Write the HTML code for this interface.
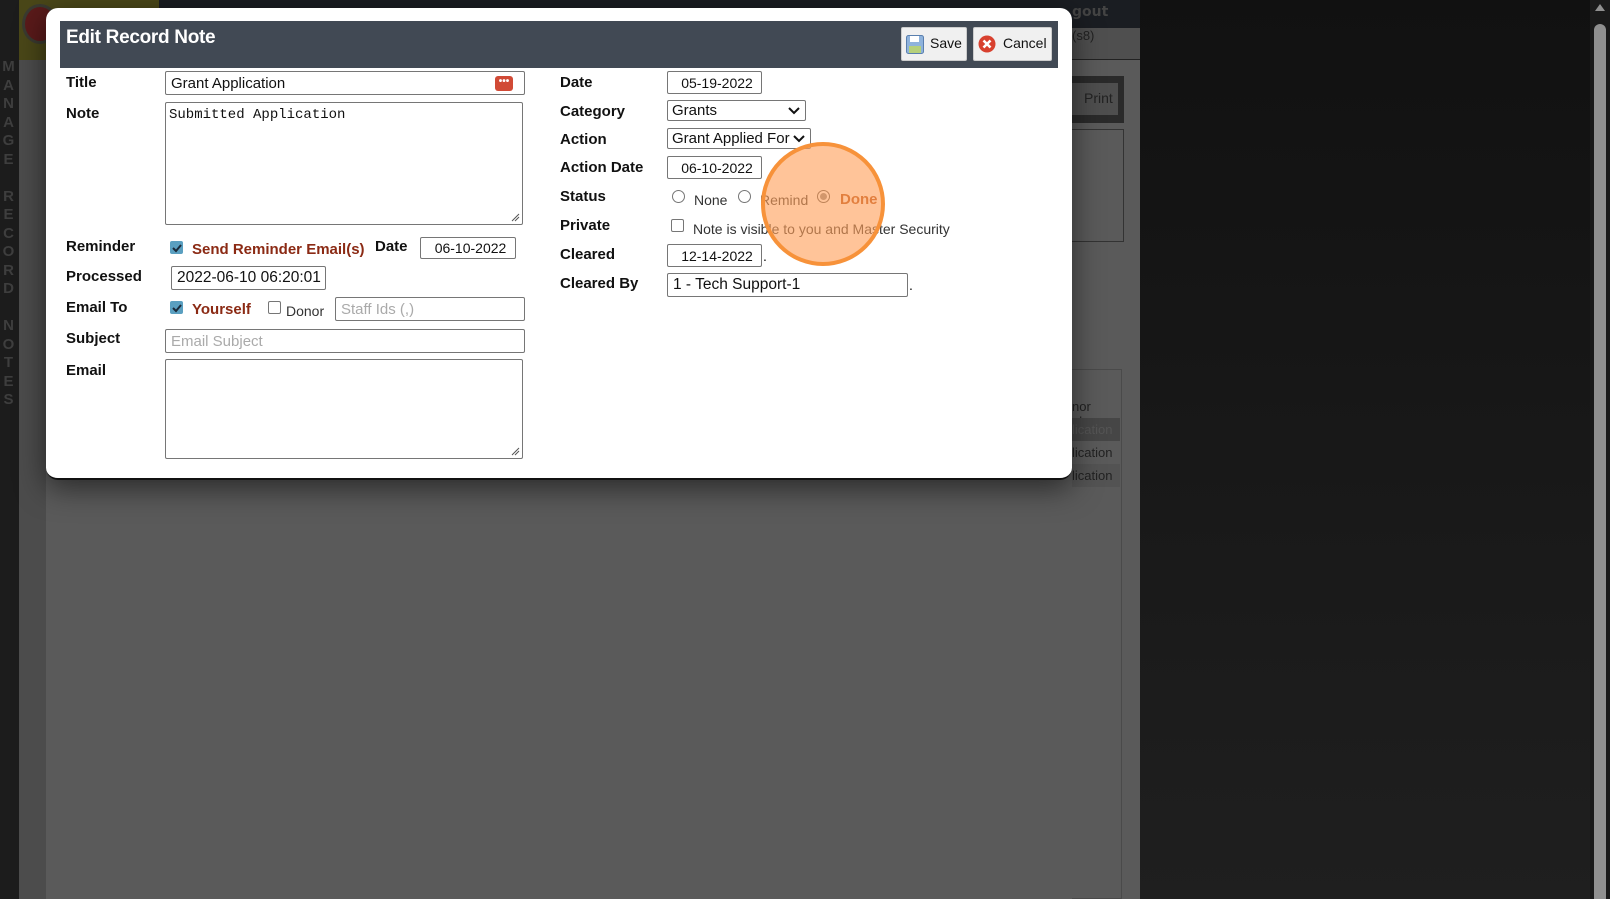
<!DOCTYPE html>
<html><head><meta charset="utf-8"><style>
*{box-sizing:border-box;margin:0;padding:0}
body{width:1610px;height:899px;overflow:hidden;background:#1a1a1a;font-family:"Liberation Sans",Arial,sans-serif;position:relative}
.a{position:absolute}
.lbl{position:absolute;font-weight:bold;color:#111;font-family:"Liberation Sans",sans-serif;font-size:15px}
.inp{position:absolute;border:1px solid #767676;background:#fff;font-size:15px;color:#111;padding-left:5px;display:flex;align-items:center;border-radius:2px}
.ta{position:absolute;border:1px solid #767676;background:#fff;border-radius:2px}
.ph{color:#aaa}
.cb{position:absolute;width:13px;height:13px;border:1px solid #767676;border-radius:2px;background:#fff}
.cbc{position:absolute;width:13px;height:13px;border-radius:2px;background:#5a9fc0}
.rd{position:absolute;width:13px;height:13px;border:1px solid #767676;border-radius:50%;background:#fff}
.txt{position:absolute;font-size:14px;color:#333}
.red{position:absolute;font-weight:bold;color:#8b2a14;font-size:15px;font-family:"Liberation Sans",sans-serif}
.sel{position:absolute;border:1px solid #767676;background:#fff;font-size:15px;color:#111;padding-left:4px;border-radius:2px;line-height:19px}
.sel svg{position:absolute;right:5px;top:6px}
.grip{position:absolute;right:2px;bottom:2px}
</style></head><body>
<div class="a" style="left:0;top:0;width:19px;height:899px;background:#1c1c1c"></div>
<div class="a" style="left:19px;top:0;width:1121px;height:899px;background:#5a5a5a"></div>
<div class="a" style="left:19px;top:0;width:1121px;height:28px;background:#1a1d22"></div>
<div class="a" style="left:19px;top:28px;width:1121px;height:32px;background:#4f4f4f;border-bottom:1px solid #222"></div>
<div class="a" style="left:19px;top:0;width:140px;height:60px;background:#4a4718"></div>
<div class="a" style="left:22px;top:4px;width:36px;height:40px;border-radius:50%;background:#5a1a1a;border:3px solid #3a3a30"></div>
<div class="a" style="left:19px;top:60px;width:27px;height:839px;background:#4c4c4c"></div>
<div class="a" style="left:0;top:58px;width:17px;font:bold 15px 'Liberation Sans',sans-serif;color:#3e3e3e;line-height:18.5px;text-align:center">M<br>A<br>N<br>A<br>G<br>E<br><br>R<br>E<br>C<br>O<br>R<br>D<br><br>N<br>O<br>T<br>E<br>S</div>
<div class="a" style="left:1072px;top:4px;color:#444;font:bold 14px 'DejaVu Sans',sans-serif">gout</div>
<div class="a" style="left:1072px;top:28px;color:#222;font-size:13px">(s8)</div>
<div class="a" style="left:1072px;top:76px;width:52px;height:47px;background:#2a2a2a"></div>
<div class="a" style="left:1072px;top:83px;width:46px;height:32px;background:#4e4e4e;color:#222;font-size:14px;padding:7px 0 0 12px">Print</div>
<div class="a" style="left:1072px;top:129px;width:52px;height:113px;border:1px solid #333;border-left:none"></div>
<div class="a" style="left:1072px;top:369px;width:50px;height:530px;border:1px solid #4a4a4a;border-left:none"></div>
<div class="a" style="left:1072px;top:394px;width:48px;height:24px;color:#222;font-size:13px;padding-top:5px">nor abou</div>
<div class="a" style="left:1072px;top:418px;width:48px;height:23px;background:#464646;color:#555;font-size:13px;padding-top:4px">lication</div>
<div class="a" style="left:1072px;top:441px;width:48px;height:23px;color:#222;font-size:13px;padding-top:4px">lication</div>
<div class="a" style="left:1072px;top:464px;width:48px;height:23px;background:#535353;color:#222;font-size:13px;padding-top:4px">lication</div>
<div class="a" style="left:1140px;top:0;width:450px;height:899px;background:linear-gradient(#111,#1f1f1f)"></div>
<div class="a" style="left:1590px;top:0;width:20px;height:899px;background:#1a1a1a"></div>
<div class="a" style="left:1594px;top:24px;width:12px;height:875px;background:#909090;border-radius:6px 6px 0 0"></div>
<div class="a" style="left:1595px;top:4px;width:0;height:0;border-left:5px solid transparent;border-right:5px solid transparent;border-bottom:7px solid #909090"></div>
<div class="a" style="left:46px;top:8px;width:1026px;height:472px;border-radius:12px;box-shadow:0 8px 30px rgba(0,0,0,.55)"></div>
<div class="a" style="left:46px;top:8px;width:1026px;height:472px;background:#fff;border-radius:12px;border-bottom:2px solid #111"></div>
<div class="a" style="left:60px;top:21px;width:998px;height:47px;background:#414954"></div>
<div class="a" style="left:66px;top:27px;color:#fff;font:bold 19px 'Liberation Sans',sans-serif;letter-spacing:-0.3px">Edit Record Note</div>
<div class="a" style="left:901px;top:27px;width:66px;height:34px;background:#f0f0f0;border:1px solid #ccc;border-radius:2px"></div>
<svg class="a" style="left:906px;top:35px" width="18" height="19" viewBox="0 0 18 19"><rect x="0.5" y="0.5" width="17" height="18" rx="2" fill="#8fb3dc" stroke="#5a7fae"/><rect x="4" y="1" width="9" height="6" fill="#fff"/><rect x="3" y="11" width="12" height="7" fill="#b6d07a"/></svg>
<div class="a" style="left:930px;top:35px;font-size:14px;color:#111">Save</div>
<div class="a" style="left:973px;top:27px;width:79px;height:34px;background:#f0f0f0;border:1px solid #ccc;border-radius:2px"></div>
<svg class="a" style="left:978px;top:35px" width="18" height="18" viewBox="0 0 18 18"><circle cx="9" cy="9" r="8.5" fill="#d8412f"/><path d="M5.5 5.5L12.5 12.5M12.5 5.5L5.5 12.5" stroke="#fff" stroke-width="2.6"/></svg>
<div class="a" style="left:1003px;top:35px;font-size:14px;color:#111">Cancel</div>

<div class="lbl" style="left:66px;top:74px">Title</div>
<div class="lbl" style="left:66px;top:105px">Note</div>
<div class="lbl" style="left:66px;top:238px">Reminder</div>
<div class="lbl" style="left:66px;top:268px">Processed</div>
<div class="lbl" style="left:66px;top:299px">Email To</div>
<div class="lbl" style="left:66px;top:330px">Subject</div>
<div class="lbl" style="left:66px;top:362px">Email</div>

<div class="inp" style="left:165px;top:71px;width:360px;height:24px">Grant Application</div>
<div class="a" style="left:495px;top:76px;width:18px;height:15px;background:#d14a36;border-radius:3px;color:#fff;font-size:10px;line-height:12px;text-align:center;font-weight:bold">•••</div>
<div class="ta" style="left:165px;top:102px;width:358px;height:123px"><div style="font:14px 'Liberation Mono',monospace;color:#111;padding:4px 3px">Submitted Application</div>
<svg class="grip" width="10" height="10"><path d="M9 2L2 9M9 5L5 9" stroke="#555"/></svg></div>

<div class="cbc" style="left:170px;top:241px"></div>
<svg class="a" style="left:170px;top:241px" width="13" height="13"><path d="M3 7l3 3 5-6" stroke="#1b2a3a" stroke-width="2" fill="none"/></svg>
<div class="red" style="left:192px;top:241px">Send Reminder Email(s)</div>
<div class="lbl" style="left:375px;top:238px">Date</div>
<div class="inp" style="left:420px;top:237px;width:96px;height:22px;justify-content:center;font-size:14px">06-10-2022</div>

<div class="inp" style="left:171px;top:266px;width:155px;height:24px;font-size:15.5px">2022-06-10 06:20:01</div>

<div class="cbc" style="left:170px;top:301px"></div>
<svg class="a" style="left:170px;top:301px" width="13" height="13"><path d="M3 7l3 3 5-6" stroke="#1b2a3a" stroke-width="2" fill="none"/></svg>
<div class="red" style="left:192px;top:301px">Yourself</div>
<div class="cb" style="left:268px;top:301px"></div>
<div class="txt" style="left:286px;top:303px">Donor</div>
<div class="inp ph" style="left:335px;top:297px;width:190px;height:24px">Staff Ids (,)</div>
<div class="inp ph" style="left:165px;top:329px;width:360px;height:24px">Email Subject</div>
<div class="ta" style="left:165px;top:359px;width:358px;height:100px"><svg class="grip" width="10" height="10"><path d="M9 2L2 9M9 5L5 9" stroke="#555"/></svg></div>

<div class="lbl" style="left:560px;top:74px">Date</div>
<div class="lbl" style="left:560px;top:103px">Category</div>
<div class="lbl" style="left:560px;top:131px">Action</div>
<div class="lbl" style="left:560px;top:159px">Action Date</div>
<div class="lbl" style="left:560px;top:188px">Status</div>
<div class="lbl" style="left:560px;top:217px">Private</div>
<div class="lbl" style="left:560px;top:246px">Cleared</div>
<div class="lbl" style="left:560px;top:275px">Cleared By</div>

<div class="inp" style="left:667px;top:71px;width:95px;height:23px;justify-content:center;font-size:14px">05-19-2022</div>
<div class="sel" style="left:667px;top:100px;width:139px;height:21px">Grants<svg width="12" height="8"><path d="M1 1l5 5 5-5" stroke="#111" stroke-width="2" fill="none"/></svg></div>
<div class="sel" style="left:667px;top:128px;width:144px;height:21px">Grant Applied For<svg width="12" height="8"><path d="M1 1l5 5 5-5" stroke="#111" stroke-width="2" fill="none"/></svg></div>
<div class="inp" style="left:667px;top:156px;width:95px;height:23px;justify-content:center;font-size:14px">06-10-2022</div>
<div class="rd" style="left:672px;top:190px"></div>
<div class="txt" style="left:694px;top:192px">None</div>
<div class="rd" style="left:738px;top:190px"></div>
<div class="txt" style="left:760px;top:192px">Remind</div>
<div class="rd" style="left:817px;top:190px;border-color:#555"><div style="margin:2px;width:7px;height:7px;border-radius:50%;background:#888"></div></div>
<div class="red" style="left:840px;top:191px;color:#b34a12">Done</div>
<div class="cb" style="left:671px;top:219px"></div>
<div class="txt" style="left:693px;top:221px">Note is visible to you and Master Security</div>
<div class="inp" style="left:667px;top:244px;width:95px;height:23px;justify-content:center;font-size:14px">12-14-2022</div>
<div class="txt" style="left:763px;top:248px;color:#111">.</div>
<div class="inp" style="left:667px;top:273px;width:241px;height:24px;font-size:15.5px">1 - Tech Support-1</div>
<div class="txt" style="left:909px;top:277px;color:#111">.</div>

<div class="a" style="left:761px;top:142px;width:124px;height:124px;border-radius:50%;background:rgba(255,160,90,.62);border:4px solid #f7923a"></div>
</body></html>
